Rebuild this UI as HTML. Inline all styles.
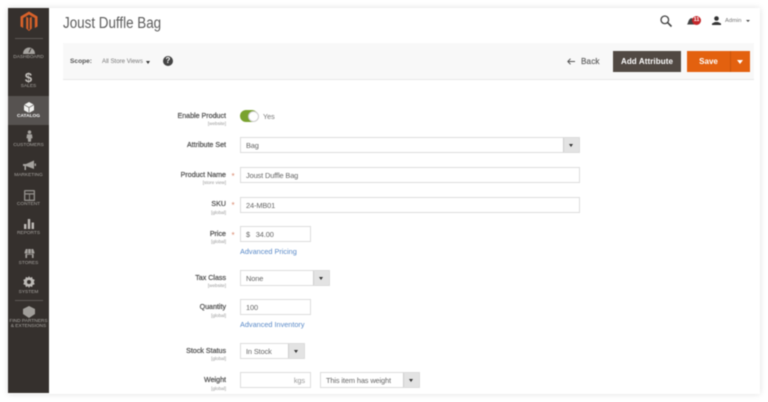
<!DOCTYPE html>
<html><head><meta charset="utf-8"><style>
html,body{margin:0;padding:0;background:#fff}
body{width:768px;height:402px;overflow:hidden;position:relative;font-family:"Liberation Sans",sans-serif;color:#444}
#w{position:absolute;left:0;top:0;width:768px;height:402px;filter:blur(.4px);overflow:hidden}
.a{position:absolute;white-space:nowrap}
.l{position:absolute;right:542px;font-size:7.1px;color:#555;white-space:nowrap;text-align:right;-webkit-text-stroke:.25px #555}
.s{position:absolute;right:542px;font-size:4.6px;color:#999;white-space:nowrap;text-align:right}
.st{position:absolute;left:231.5px;font-size:8px;color:#d9866a}
.i{position:absolute;box-sizing:border-box;height:16px;background:#fff;border:1px solid #dcdcdc;font-size:7.4px;letter-spacing:-.12px;line-height:15.5px;padding-left:5px;color:#666;white-space:nowrap}
.b{position:absolute;top:0;right:0;width:15px;height:14px;background:#e3e3e3;border-left:1px solid #ccc}
.b:after{content:"";position:absolute;left:5px;top:6px;border:2.5px solid transparent;border-top:3px solid #333;border-bottom:0}
.n{position:absolute;left:8px;width:41px;text-align:center;font-size:4.8px;color:#a8a5a1;line-height:5.5px;white-space:nowrap}
.lk{position:absolute;left:240px;font-size:7.3px;color:#5a8ac8;white-space:nowrap}
svg{position:absolute;overflow:visible}
</style></head><body><div id="w">
<div class="a" style="left:8px;top:8px;width:752px;height:386px;background:#fff;box-shadow:0 0 6px rgba(0,0,0,.13)"></div>
<div class="a" style="left:8px;top:8px;width:41px;height:385px;background:#35302d"></div>
<div class="a" style="left:8px;top:96px;width:41px;height:29px;background:#565250"></div>
<div class="a" style="left:15px;top:38px;width:28px;height:1px;background:#5c5855"></div>
<div class="a" style="left:15px;top:300px;width:28px;height:1px;background:#5c5855"></div>

<svg style="left:20px;top:11px" width="18" height="21" viewBox="0 0 18 21"><path d="M9 0.5 L17.5 5.5V15.5L14.8 17V7L9 3.6 3.2 7V17L.5 15.5V5.5Z" fill="#d8622a"/><path d="M9 7.2 11.8 5.6V17.5L9 20 6.2 17.5V5.6Z" fill="#d8622a"/><path d="M8.3 7 8.3 18.6 9.7 18.6 9.7 7Z" fill="#35302d"/></svg>

<svg style="left:23px;top:45px" width="12" height="9" viewBox="0 0 12 9"><path d="M0 9A6 6.5 0 0 1 12 9Z" fill="#a5a29e"/><path d="M6 7.5 8 3.5" stroke="#35302d" stroke-width="1"/></svg>
<div class="n" style="top:55px">DASHBOARD</div>
<div class="a" style="left:8px;top:70px;width:41px;text-align:center;font-size:13px;line-height:15px;font-weight:bold;color:#c4c1bd">$</div>
<div class="n" style="top:84px">SALES</div>
<svg style="left:24px;top:102px" width="10" height="11" viewBox="0 0 10 11"><path d="M5 0 10 2.7V8.3L5 11 0 8.3V2.7Z" fill="#f2f2f0"/><path d="M5 5.5V11M0 2.7 5 5.5 10 2.7" stroke="#565250" stroke-width=".7" fill="none"/></svg>
<div class="n" style="top:113.5px;color:#fff;font-weight:bold">CATALOG</div>
<svg style="left:25.5px;top:130px" width="7" height="12" viewBox="0 0 8 13"><circle cx="4" cy="2" r="2" fill="#a5a29e"/><path d="M1.2 4.5H6.8L7.5 9H6L5.6 13H2.4L2 9H.5Z" fill="#a5a29e"/></svg>
<div class="n" style="top:143px">CUSTOMERS</div>
<svg style="left:23px;top:160px" width="13" height="11" viewBox="0 0 13 11"><path d="M0 4H3L11 .5V9L3 6V10H1.5V6H0Z" fill="#a5a29e"/><rect x="11.6" y="3.5" width="1.4" height="2.5" fill="#a5a29e"/></svg>
<div class="n" style="top:172.5px">MARKETING</div>
<svg style="left:23.5px;top:189.5px" width="11" height="11" viewBox="0 0 12 12"><rect width="12" height="12" rx="1" fill="#8f8c88"/><rect x="1.5" y="1.5" width="9" height="2" fill="#35302d"/><rect x="1.5" y="5" width="4" height="5.5" fill="#35302d"/><rect x="6.5" y="5" width="4" height="5.5" fill="#35302d"/></svg>
<div class="n" style="top:201.5px">CONTENT</div>
<svg style="left:24px;top:219px" width="10" height="10" viewBox="0 0 10 10"><rect x="0" y="5" width="2.4" height="5" fill="#bdbab6"/><rect x="3.8" y="0" width="2.4" height="10" fill="#bdbab6"/><rect x="7.6" y="3.5" width="2.4" height="6.5" fill="#bdbab6"/></svg>
<div class="n" style="top:231px">REPORTS</div>
<svg style="left:23.5px;top:249px" width="11" height="9" viewBox="0 0 12 11"><path d="M1.5 0H10.5L12 4V5.5H0V4Z" fill="#a5a29e"/><path d="M1 6H11V11H1Z" fill="#a5a29e"/><path d="M4 0V5.5M8 0V5.5" stroke="#35302d" stroke-width=".7"/><rect x="3" y="7" width="6" height="4" fill="#35302d"/></svg>
<div class="n" style="top:260.5px">STORES</div>
<svg style="left:23px;top:276px" width="12" height="12" viewBox="0 0 12 12"><path d="M6 0 7 1.8 9.2 1 9.6 3 11.7 3.8 10.8 6 11.7 8.2 9.6 9 9.2 11 7 10.2 6 12 5 10.2 2.8 11 2.4 9 .3 8.2 1.2 6 .3 3.8 2.4 3 2.8 1 5 1.8Z" fill="#bdbab6"/><circle cx="6" cy="6" r="2" fill="#35302d"/></svg>
<div class="n" style="top:289.5px">SYSTEM</div>
<svg style="left:23px;top:306px" width="12" height="12" viewBox="0 0 12 12"><path d="M6 0 12 3V8L6 12 0 8V3Z" fill="#a09d99"/></svg>
<div class="n" style="top:318.5px">FIND PARTNERS<br>&amp; EXTENSIONS</div>

<div class="a" style="left:63px;top:14px;font-size:15.5px;line-height:20px;color:#5c5c5c;transform:scaleX(.865);transform-origin:0 0">Joust Duffle Bag</div>

<svg style="left:660px;top:15px" width="12" height="12" viewBox="0 0 12 12"><circle cx="4.8" cy="4.8" r="3.8" fill="none" stroke="#444" stroke-width="1.3"/><path d="M7.6 7.6 11.5 11.5" stroke="#444" stroke-width="1.6"/></svg>
<svg style="left:687px;top:17px" width="9" height="9" viewBox="0 0 9 9"><path d="M0 7.5C1.5 6 1 2 4.5 1 8 2 7.5 6 9 7.5Z" fill="#444"/></svg>
<div class="a" style="left:692px;top:16px;width:9px;height:9px;border-radius:50%;background:#c4262a;color:#fff;font-size:5.5px;line-height:9px;text-align:center;font-weight:bold">11</div>
<svg style="left:712px;top:16px" width="9" height="9" viewBox="0 0 9 9"><circle cx="4.5" cy="2.5" r="2.3" fill="#333"/><path d="M0 9V7.5L3 6H6L9 7.5V9Z" fill="#333"/></svg>
<div class="a" style="left:725px;top:17.5px;font-size:5.8px;line-height:7px;color:#777">Admin</div>
<div class="a" style="left:746px;top:20px;border:2px solid transparent;border-top:2.5px solid #444;border-bottom:0"></div>

<div class="a" style="left:63px;top:43px;width:691px;height:36px;background:#f8f8f8;border-bottom:1px solid #e8e8e8"></div>
<div class="a" style="left:70px;top:58px;font-size:6.6px;line-height:8px;font-weight:bold;color:#555">Scope:</div>
<div class="a" style="left:102px;top:58px;font-size:6.1px;line-height:8px;color:#777">All Store Views</div>
<div class="a" style="left:146px;top:60.5px;border:2.2px solid transparent;border-top:3px solid #333;border-bottom:0"></div>
<div class="a" style="left:163px;top:56px;width:10px;height:10px;border-radius:50%;background:#444;color:#fff;font-size:8px;line-height:10px;text-align:center;font-weight:bold">?</div>

<svg style="left:567px;top:58px" width="8" height="7" viewBox="0 0 8 7"><path d="M8 3.5H1M3.5 .7 .8 3.5 3.5 6.3" fill="none" stroke="#555" stroke-width="1"/></svg>
<div class="a" style="left:581px;top:57px;font-size:8.2px;line-height:10px;color:#666;letter-spacing:.1px;-webkit-text-stroke:.2px #666">Back</div>
<div class="a" style="left:613px;top:51px;width:68px;height:21px;background:#514943;color:#fff;font-size:8px;line-height:21px;text-align:center;font-weight:bold;letter-spacing:.1px">Add Attribute</div>
<div class="a" style="left:687px;top:51px;width:63px;height:21px;background:#e3610f"></div>
<div class="a" style="left:687px;top:51px;width:43px;height:21px;color:#fff;font-size:8px;line-height:21px;text-align:center;font-weight:bold">Save</div>
<div class="a" style="left:730px;top:51px;width:1px;height:21px;background:#c9550c"></div>
<div class="a" style="left:737px;top:60px;border:3px solid transparent;border-top:4px solid #fff;border-bottom:0"></div>

<div class="l" style="top:111.5px">Enable Product</div><div class="s" style="top:121px">[website]</div>
<div class="a" style="left:240px;top:110px;width:18px;height:12px;border-radius:6px;background:#79a22e"></div>
<div class="a" style="left:248px;top:110.5px;width:11px;height:11px;border-radius:50%;background:#fff;border:.5px solid #ccc;box-sizing:border-box"></div>
<div class="a" style="left:263px;top:112px;font-size:7.2px;line-height:9px;color:#777">Yes</div>

<div class="l" style="top:141px">Attribute Set</div>
<div class="i" style="left:240px;top:137px;width:340px">Bag<div class="b"></div></div>

<div class="l" style="top:170.5px">Product Name</div><div class="s" style="top:180px">[store view]</div><div class="st" style="top:172px">*</div>
<div class="i" style="left:240px;top:167px;width:340px">Joust Duffle Bag</div>

<div class="l" style="top:200px">SKU</div><div class="s" style="top:209.5px">[global]</div><div class="st" style="top:201px">*</div>
<div class="i" style="left:240px;top:197px;width:340px">24-MB01</div>

<div class="l" style="top:230px">Price</div><div class="s" style="top:239px">[global]</div><div class="st" style="top:231px">*</div>
<div class="i" style="left:240px;top:226px;width:71px">$ &nbsp;&nbsp;34.00</div>
<div class="lk" style="top:247px">Advanced Pricing</div>

<div class="l" style="top:274px">Tax Class</div><div class="s" style="top:283px">[website]</div>
<div class="i" style="left:240px;top:270px;width:90px">None<div class="b"></div></div>

<div class="l" style="top:303px">Quantity</div><div class="s" style="top:312.5px">[global]</div>
<div class="i" style="left:240px;top:299px;width:71px">100</div>
<div class="lk" style="top:320px">Advanced Inventory</div>

<div class="l" style="top:346.5px">Stock Status</div><div class="s" style="top:356px">[global]</div>
<div class="i" style="left:240px;top:343px;width:65px">In Stock<div class="b"></div></div>

<div class="l" style="top:376px">Weight</div><div class="s" style="top:385.5px">[global]</div>
<div class="i" style="left:240px;top:372px;width:71px;padding:0 5px;text-align:right;color:#999">kgs</div>
<div class="i" style="left:320px;top:372px;width:100px">This item has weight<div class="b"></div></div>
</div></body></html>
